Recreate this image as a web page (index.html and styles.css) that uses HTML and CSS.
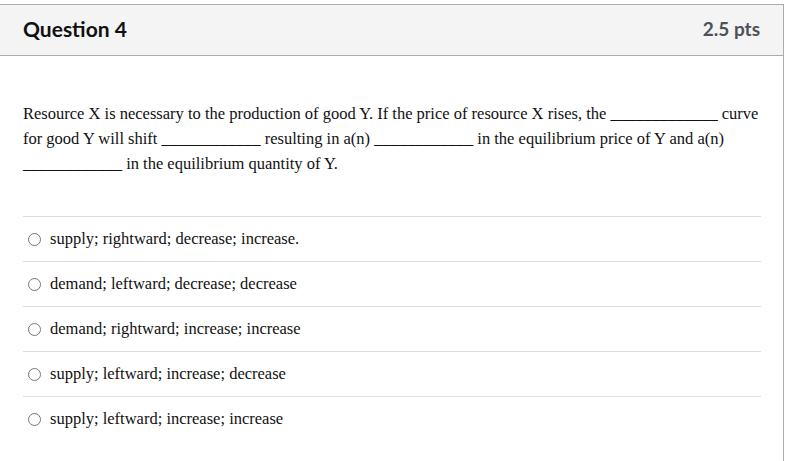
FILE: index.html
```html
<!DOCTYPE html>
<html>
<head>
<meta charset="utf-8">
<link rel="stylesheet" href="styles.css">
</head>
<body>
<div class="card">
  <div class="header">
    <span class="title">Question 4</span>
    <span class="pts">2.5 pts</span>
  </div>
  <div class="body">
    <p class="question">Resource X is necessary to the production of good Y. If the price of resource X rises, the _____________ curve for good Y will shift ____________ resulting in a(n) ____________ in the equilibrium price of Y and a(n) ____________ in the equilibrium quantity of Y.</p>
    <ul class="answers">
      <li class="answer"><input type="radio" name="q4" class="radio"><span>supply; rightward; decrease; increase.</span></li>
      <li class="answer"><input type="radio" name="q4" class="radio"><span>demand; leftward; decrease; decrease</span></li>
      <li class="answer"><input type="radio" name="q4" class="radio"><span>demand; rightward; increase; increase</span></li>
      <li class="answer"><input type="radio" name="q4" class="radio"><span>supply; leftward; increase; decrease</span></li>
      <li class="answer"><input type="radio" name="q4" class="radio"><span>supply; leftward; increase; increase</span></li>
    </ul>
  </div>
</div>
</body>
</html>
```

FILE: styles.css
```css
html, body {
  margin: 0;
  padding: 0;
  background: #ffffff;
}
.card {
  margin: 4px 1px 0 0;
  border: 1px solid #acacac;
  border-left: 0;
  border-bottom: 0;
  min-height: 470px;
  box-sizing: border-box;
}
.header {
  display: flex;
  justify-content: space-between;
  align-items: center;
  height: 51px;
  padding: 0 23px 3px 23px;
  box-sizing: border-box;
  background: #f4f4f4;
  border-bottom: 1px solid #acacac;
  font-family: Lato, "Liberation Sans", sans-serif;
}
.title {
  font-size: 21px;
  font-weight: 700;
  color: #111111;
}
.pts {
  font-size: 19px;
  font-weight: 700;
  color: #4c5258;
}
.body {
  padding: 0 22px 0 23px;
  font-family: "Liberation Serif", "Times New Roman", serif;
  font-size: 16.5px;
  color: #111111;
}
.question {
  margin: 0;
  padding-top: 45px;
  line-height: 25px;
  padding-bottom: 40px;
}
.answers {
  list-style: none;
  margin: 0;
  padding: 0;
}
.answer {
  display: flex;
  align-items: center;
  height: 44px;
  border-top: 1px solid #dddddd;
}
.radio {
  width: 13px;
  height: 13px;
  margin: 0 9px 0 5px;
}
```
